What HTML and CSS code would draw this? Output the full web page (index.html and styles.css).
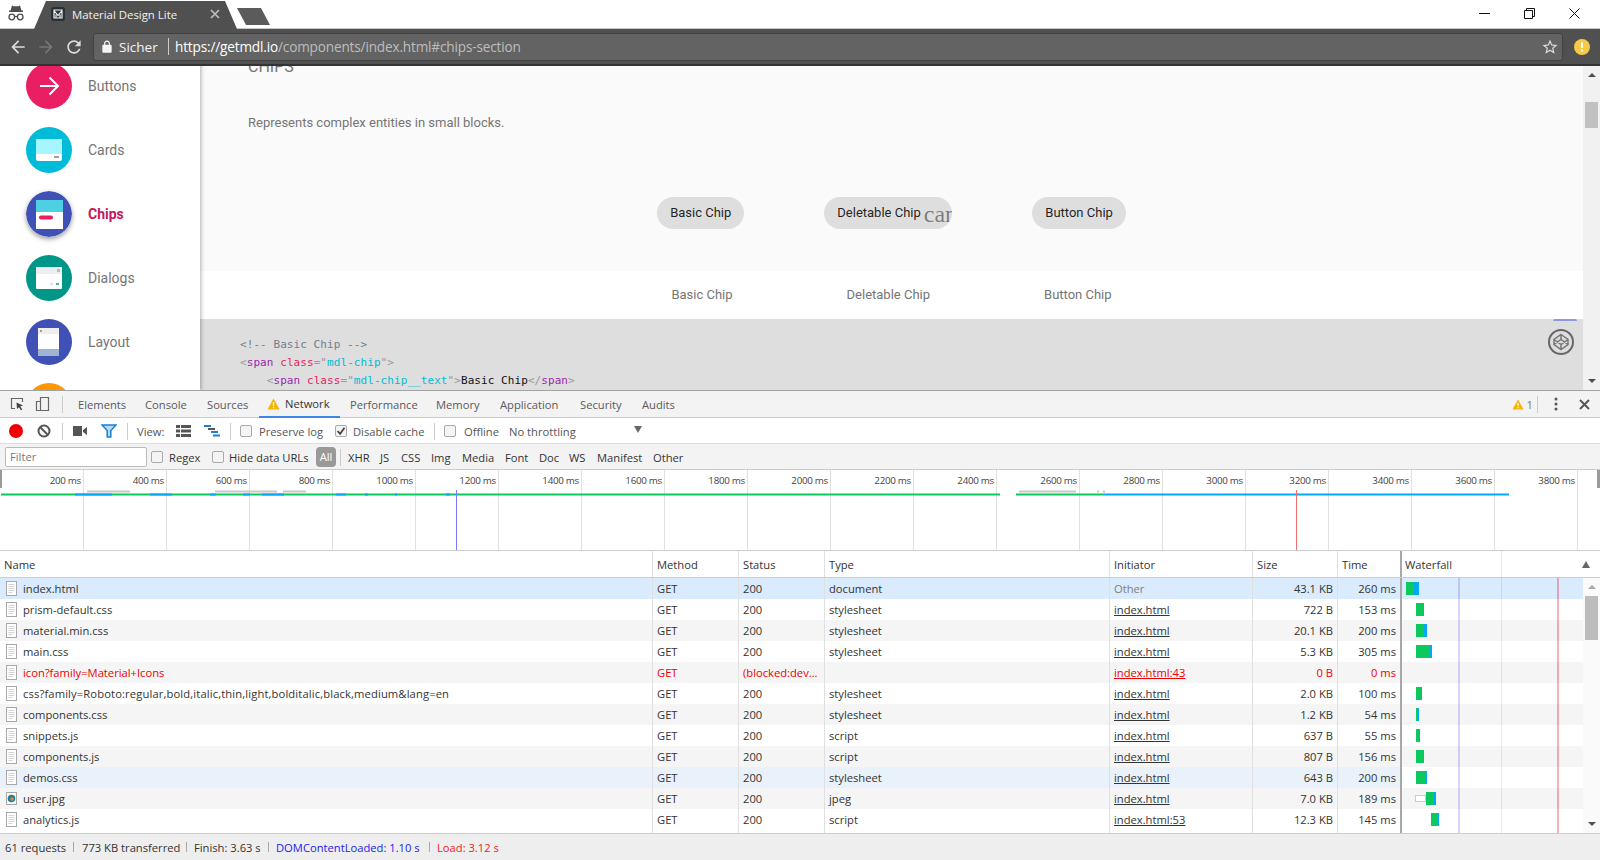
FILE: index.html
```html
<!DOCTYPE html>
<html lang="de">
<head>
<meta charset="utf-8">
<title>Material Design Lite</title>
<link rel="stylesheet" href="styles.css">
</head>
<body>
<svg class="defs" width="0" height="0" aria-hidden="true">
  <symbol id="doc" viewBox="0 0 11 15">
    <rect x=".5" y=".5" width="10" height="14" fill="#fff" stroke="#a8a8a8"/>
    <path d="M2.5 3.5h6M2.5 5.5h6M2.5 7.5h6M2.5 9.5h6M2.5 11.5h4" stroke="#d4d4d4" fill="none"/>
  </symbol>
  <symbol id="check" viewBox="0 0 12 12">
    <path d="M2.5 6l2.6 2.8 4.4-6" stroke="#444" stroke-width="1.8" fill="none"/>
  </symbol>
  <symbol id="warn" viewBox="0 0 14 13">
    <path d="M7 .5l6.6 12H.4z" fill="#f4b400"/>
    <path d="M6.3 4.5h1.4v4.2H6.3zM6.3 9.6h1.4v1.4H6.3z" fill="#fff"/>
  </symbol>
</svg>

<header class="tabstrip">
  <svg class="incognito" width="22" height="20" viewBox="0 0 22 20">
    <path d="M7 2.5l1.8.8h4.4l1.8-.8 1.4 5H18v1.4H4V7.500h1.600z" fill="#4d4d4d"/>
    <circle cx="6.800" cy="14" r="2.800" fill="none" stroke="#4d4d4d" stroke-width="1.300"/>
    <circle cx="15.200" cy="14" r="2.800" fill="none" stroke="#4d4d4d" stroke-width="1.300"/>
    <path d="M9.500 13.500h3" stroke="#4d4d4d" stroke-width="1.200"/>
  </svg>
  <div class="tab">
    <svg class="favicon" width="14" height="14" viewBox="0 0 14 14">
      <rect width="14" height="14" rx="3" fill="#263238"/>
      <path d="M3 3h8v8H3zM3 3.500l4 5 4-5M5 11V7.500M9 11V7.500" fill="none" stroke="#eceff1" stroke-width="1.200"/>
    </svg>
    <span class="tab-title">Material Design Lite</span>
    <svg class="tab-close" width="10" height="10" viewBox="0 0 10 10"><path d="M1 1l8 8M9 1l-8 8" stroke="#bdbdbd" stroke-width="1.700"/></svg>
  </div>
  <div class="newtab"></div>
  <div class="winctl">
    <svg width="11" height="11" viewBox="0 0 11 11"><path d="M0 5.500h11" stroke="#111" stroke-width="1"/></svg>
    <svg width="11" height="11" viewBox="0 0 11 11"><path d="M.5 2.500h8v8h-8zM2.500 2.500v-2h8v8h-2" fill="none" stroke="#111"/></svg>
    <svg width="11" height="11" viewBox="0 0 11 11"><path d="M.5.500l10 10M10.500.500l-10 10" stroke="#111"/></svg>
  </div>
</header>

<nav class="toolbar">
  <svg class="navbtn" width="20" height="20" viewBox="0 0 24 24"><path fill="#dcdcdc" d="M20 11H7.830l5.590-5.590L12 4l-8 8 8 8 1.410-1.410L7.830 13H20v-2z"/></svg>
  <svg class="navbtn" width="20" height="20" viewBox="0 0 24 24"><path fill="#767676" d="M4 11h12.170l-5.590-5.590L12 4l8 8-8 8-1.410-1.410L16.170 13H4v-2z"/></svg>
  <svg class="navbtn" width="20" height="20" viewBox="0 0 24 24"><path fill="#dcdcdc" d="M17.650 6.350C16.200 4.900 14.210 4 12 4c-4.420 0-7.990 3.580-7.990 8s3.570 8 7.990 8c3.730 0 6.840-2.550 7.730-6h-2.080c-.82 2.330-3.040 4-5.650 4-3.310 0-6-2.690-6-6s2.690-6 6-6c1.660 0 3.140.69 4.220 1.780L13 11h7V4l-2.350 2.350z"/></svg>
  <div class="omnibox">
    <svg class="lock" width="14" height="14" viewBox="0 0 24 24"><path fill="#f5f5f5" d="M18 8h-1V6c0-2.760-2.240-5-5-5S7 3.240 7 6v2H6c-1.100 0-2 .9-2 2v10c0 1.100.9 2 2 2h12c1.100 0 2-.9 2-2V10c0-1.100-.9-2-2-2zM9 6c0-1.660 1.340-3 3-3s3 1.340 3 3v2H9V6z"/></svg>
    <span class="secure">Sicher</span>
    <span class="omni-sep"></span>
    <span class="url"><b class="url-host">https://getmdl.io</b>/components/index.html#chips-section</span>
    <svg class="star" width="18" height="18" viewBox="0 0 24 24"><path fill="#dcdcdc" d="M22 9.240l-7.190-.62L12 2 9.190 8.630 2 9.240l5.460 4.730L5.820 21 12 17.270 18.180 21l-1.630-7.030L22 9.240zM12 15.400l-3.760 2.270 1-4.280-3.320-2.880 4.380-.38L12 6.100l1.710 4.040 4.380.38-3.320 2.880 1 4.280L12 15.400z"/></svg>
  </div>
  <svg class="badge" width="16" height="16" viewBox="0 0 16 16"><circle cx="8" cy="8" r="8" fill="#f7c948"/><path d="M7 3.500h2v5.500H7zM7 10.500h2v2H7z" fill="#fff"/></svg>
</nav>

<section class="page">
  <aside class="sidebar">
    <div class="side-item">
      <svg class="side-icon" viewBox="0 0 46 46"><circle cx="23" cy="23" r="23" fill="#e91e63"/><path d="M14 23h17M23.500 14.500L32 23l-8.500 8.500" fill="none" stroke="#fff" stroke-width="2"/></svg>
      <span>Buttons</span>
    </div>
    <div class="side-item">
      <svg class="side-icon" viewBox="0 0 46 46"><circle cx="23" cy="23" r="23" fill="#00bcd9"/><rect x="10" y="12" width="26" height="22" rx="2" fill="#fff"/><path d="M10 27V14a2 2 0 0 1 2-2h22a2 2 0 0 1 2 2v13z" fill="#a7f5ff"/><rect x="28" y="29" width="5" height="2" fill="#9e9e9e"/></svg>
      <span>Cards</span>
    </div>
    <div class="side-item side-active">
      <svg class="side-icon side-lifted" viewBox="0 0 46 46"><circle cx="23" cy="23" r="23" fill="#3f51b5"/><rect x="10" y="9" width="27" height="29" fill="#fff"/><rect x="10" y="9" width="27" height="12" fill="#4dd0e1"/><rect x="13" y="24.500" width="14" height="4" rx="2" fill="#e91e63"/></svg>
      <span>Chips</span>
    </div>
    <div class="side-item">
      <svg class="side-icon" viewBox="0 0 46 46"><circle cx="23" cy="23" r="23" fill="#009688"/><rect x="10" y="12" width="26" height="22" rx="1" fill="#fff"/><rect x="10" y="12" width="26" height="7" fill="#eee"/><rect x="31" y="14" width="3" height="3" fill="#bdbdbd"/><rect x="24" y="28" width="3" height="2" fill="#e0e0e0"/><rect x="30" y="28" width="3" height="2" fill="#4db6ac"/></svg>
      <span>Dialogs</span>
    </div>
    <div class="side-item">
      <svg class="side-icon" viewBox="0 0 46 46"><circle cx="23" cy="23" r="23" fill="#3f51b5"/><rect x="12" y="9" width="21" height="28" rx="1.500" fill="#fff"/><rect x="12" y="9" width="21" height="6" fill="#eee"/><rect x="14" y="11" width="2" height="2" fill="#9e9e9e"/><rect x="12" y="30" width="21" height="7" fill="#9fb4d3"/></svg>
      <span>Layout</span>
    </div>
    <div class="side-item">
      <svg class="side-icon" viewBox="0 0 46 46"><circle cx="23" cy="23" r="23" fill="#ff9800"/></svg>
      <span></span>
    </div>
  </aside>

  <main class="content">
    <div class="preview">
      <h2 class="heading">Chips</h2>
      <p class="lead">Represents complex entities in small blocks.</p>
      <div class="chips">
        <span class="chip">Basic Chip</span>
        <span class="chip chip-del">Deletable Chip<span class="chip-cancel">cancel</span></span>
        <span class="chip">Button Chip</span>
      </div>
    </div>
    <div class="captions">
      <span class="cap cap-a">Basic Chip</span>
      <span class="cap cap-b">Deletable Chip</span>
      <span class="cap cap-c">Button Chip</span>
    </div>
    <pre class="code"><span class="c-com">&lt;!-- Basic Chip --&gt;</span>
<span class="c-pun">&lt;</span><span class="c-tag">span</span> <span class="c-att">class</span><span class="c-pun">=</span><span class="c-pun">"</span><span class="c-str">mdl-chip</span><span class="c-pun">"&gt;</span>
    <span class="c-pun">&lt;</span><span class="c-tag">span</span> <span class="c-att">class</span><span class="c-pun">=</span><span class="c-pun">"</span><span class="c-str">mdl-chip__text</span><span class="c-pun">"&gt;</span>Basic Chip<span class="c-pun">&lt;/</span><span class="c-tag">span</span><span class="c-pun">&gt;</span></pre>
    <span class="fab-sliver"></span>
    <svg class="codepen" width="28" height="28" viewBox="0 0 28 28">
      <circle cx="14" cy="14" r="12" fill="none" stroke="#666" stroke-width="2"/>
      <path d="M14 6.500l7 5v5l-7 5-7-5v-5zM7 11.500l7 5 7-5M14 6.500v5M7 16.500l7-5 7 5M14 16.500v5" fill="none" stroke="#777" stroke-width="1.500"/>
    </svg>
  </main>

  <div class="scroll">
    <span class="arrow-up"></span>
    <span class="thumb thumb-page"></span>
    <span class="arrow-down"></span>
  </div>
</section>

<section class="devtools">
  <div class="dt-tabs">
    <svg class="dt-ico" width="16" height="16" viewBox="0 0 16 16"><path d="M13.500 6V2.500h-11v10H6" fill="none" stroke="#666" stroke-width="1.200"/><path d="M7.500 6.500l6.500 3-2.700 1 2 3-1.300.8-2-3-2 1.700z" fill="#444"/></svg>
    <svg class="dt-ico" width="16" height="16" viewBox="0 0 16 16"><path d="M5.500 1.500h8v13h-8zM5.500 5.500h-4v9h4" fill="none" stroke="#666" stroke-width="1.200"/></svg>
    <span class="vsep vsep-end"></span>
    <span class="dt-tab">Elements</span>
    <span class="dt-tab">Console</span>
    <span class="dt-tab">Sources</span>
    <span class="dt-tab dt-tab-active"><svg width="13" height="12"><use href="#warn"/></svg>Network</span>
    <span class="dt-tab">Performance</span>
    <span class="dt-tab">Memory</span>
    <span class="dt-tab">Application</span>
    <span class="dt-tab">Security</span>
    <span class="dt-tab">Audits</span>
    <div class="dt-right">
      <svg width="12" height="11"><use href="#warn"/></svg>
      <span class="warn-count">1</span>
      <span class="vsep"></span>
      <svg class="kebab" width="4" height="14" viewBox="0 0 4 14"><circle cx="2" cy="2" r="1.500" fill="#555"/><circle cx="2" cy="7" r="1.500" fill="#555"/><circle cx="2" cy="12" r="1.500" fill="#555"/></svg>
      <svg class="dt-close" width="11" height="11" viewBox="0 0 11 11"><path d="M1 1l9 9M10 1l-9 9" stroke="#555" stroke-width="2"/></svg>
    </div>
  </div>

  <div class="dt-bar">
    <span class="rec"></span>
    <svg width="14" height="14" viewBox="0 0 14 14"><circle cx="7" cy="7" r="5.500" fill="none" stroke="#555" stroke-width="2"/><path d="M3 3l8 8" stroke="#555" stroke-width="2"/></svg>
    <span class="vsep"></span>
    <svg width="14" height="10" viewBox="0 0 14 10"><path d="M0 0h9v10H0zM10 4l4-3v8l-4-3z" fill="#555"/></svg>
    <svg width="16" height="14" viewBox="0 0 16 14"><path d="M1 1h14L9.800 6.500V13H6.200V6.500z" fill="#b5ddfa" stroke="#1a7fd6" stroke-width="1.500"/></svg>
    <span class="vsep"></span>
    <span>View:</span>
    <svg width="15" height="12" viewBox="0 0 15 12"><path d="M0 0h4v3H0zM5 0h10v3H5zM0 4.500h4v3H0zM5 4.500h10v3H5zM0 9h4v3H0zM5 9h10v3H5z" fill="#555"/></svg>
    <svg width="16" height="12" viewBox="0 0 16 12"><path d="M0 0h7v2H0z" fill="#1a7fd6"/><path d="M4 3h7v2H4z" fill="#555"/><path d="M7 6h7v2H7zM9 9.500h7v2H9z" fill="#1a7fd6"/></svg>
    <span class="vsep"></span>
    <span class="cbox"></span>
    <span>Preserve log</span>
    <span class="cbox"><svg width="12" height="12"><use href="#check"/></svg></span>
    <span>Disable cache</span>
    <span class="vsep"></span>
    <span class="cbox"></span>
    <span>Offline</span>
    <span>No throttling</span>
    <span class="tri-down"></span>
  </div>

  <div class="dt-filter">
    <input class="filter-input" placeholder="Filter">
    <span class="cbox"></span>
    <span>Regex</span>
    <span class="cbox"></span>
    <span>Hide data URLs</span>
    <span class="pill">All</span>
    <span class="vsep"></span>
    <span>XHR</span><span>JS</span><span>CSS</span><span>Img</span><span>Media</span><span>Font</span><span>Doc</span><span>WS</span><span>Manifest</span><span>Other</span>
  </div>

  <div class="overview">
    <div class="ticks">
      <span>200 ms</span><span>400 ms</span><span>600 ms</span><span>800 ms</span><span>1000 ms</span><span>1200 ms</span><span>1400 ms</span><span>1600 ms</span><span>1800 ms</span><span>2000 ms</span><span>2200 ms</span><span>2400 ms</span><span>2600 ms</span><span>2800 ms</span><span>3000 ms</span><span>3200 ms</span><span>3400 ms</span><span>3600 ms</span><span>3800 ms</span>
    </div>
    <svg class="ov-chart" width="1600" height="80" viewBox="0 0 1600 80">
      <path d="M0 0h2v18H0zM1597 0h3v18h-3z" fill="#9a9a9a"/>
      <path d="M87 21.500h43M215 21.500h62M283 21.500h23M1019 21.500h57M1097 21.500h2M1103 21.500h2" stroke="#c8c8c8" stroke-width="2"/>
      <path d="M1 24.500h999M1016 24.500h88" stroke="#0bc95c" stroke-width="2"/>
      <path d="M75 24.500h37M150 24.500h22M210 24.500h6M243 24.500h7M262 24.500h22M336 24.500h10M365 24.500h3M395 24.500h2M446 24.500h4M1104 24.500h405" stroke="#03a9f4" stroke-width="2"/>
      <path d="M456.500 20v60" stroke="#7a7aff"/>
      <path d="M1296.500 20v60" stroke="#f26d6d"/>
    </svg>
  </div>

  <div class="net-head">
    <span class="col">Name</span><span class="col">Method</span><span class="col">Status</span><span class="col">Type</span><span class="col">Initiator</span><span class="col">Size</span><span class="col">Time</span>
    <span class="col col-wf">Waterfall<span class="wf-sep"></span><span class="sort-up"></span></span>
  </div>

  <div class="net-body">
    <div class="net-list">
      <div class="row row-selected"><span class="col col-name"><svg width="11" height="15"><use href="#doc"/></svg>index.html</span><span class="col">GET</span><span class="col">200</span><span class="col">document</span><span class="col col-other">Other</span><span class="col col-num">43.1 KB</span><span class="col col-num">260 ms</span><span class="col col-bars"><i class="gap" style="width:5px"></i><i class="green" style="width:8px"></i><i class="blue" style="width:5px"></i></span></div>
      <div class="row"><span class="col col-name"><svg width="11" height="15"><use href="#doc"/></svg>prism-default.css</span><span class="col">GET</span><span class="col">200</span><span class="col">stylesheet</span><span class="col col-link">index.html</span><span class="col col-num">722 B</span><span class="col col-num">153 ms</span><span class="col col-bars"><i class="gap" style="width:15px"></i><i class="green" style="width:7px"></i><i class="blue" style="width:1px"></i></span></div>
      <div class="row row-alt"><span class="col col-name"><svg width="11" height="15"><use href="#doc"/></svg>material.min.css</span><span class="col">GET</span><span class="col">200</span><span class="col">stylesheet</span><span class="col col-link">index.html</span><span class="col col-num">20.1 KB</span><span class="col col-num">200 ms</span><span class="col col-bars"><i class="gap" style="width:15px"></i><i class="green" style="width:8px"></i><i class="blue" style="width:3px"></i></span></div>
      <div class="row"><span class="col col-name"><svg width="11" height="15"><use href="#doc"/></svg>main.css</span><span class="col">GET</span><span class="col">200</span><span class="col">stylesheet</span><span class="col col-link">index.html</span><span class="col col-num">5.3 KB</span><span class="col col-num">305 ms</span><span class="col col-bars"><i class="gap" style="width:15px"></i><i class="green" style="width:14px"></i><i class="blue" style="width:2px"></i></span></div>
      <div class="row row-alt row-error"><span class="col col-name"><svg width="11" height="15"><use href="#doc"/></svg>icon?family=Material+Icons</span><span class="col">GET</span><span class="col">(blocked:dev...</span><span class="col"></span><span class="col col-link">index.html:43</span><span class="col col-num">0 B</span><span class="col col-num">0 ms</span><span class="col col-bars"></span></div>
      <div class="row"><span class="col col-name"><svg width="11" height="15"><use href="#doc"/></svg><span class="name-long">css?family=Roboto:regular,bold,italic,thin,light,bolditalic,black,medium&amp;lang=en</span></span><span class="col">GET</span><span class="col">200</span><span class="col">stylesheet</span><span class="col col-link">index.html</span><span class="col col-num">2.0 KB</span><span class="col col-num">100 ms</span><span class="col col-bars"><i class="gap" style="width:15px"></i><i class="green" style="width:5px"></i><i class="blue" style="width:1px"></i></span></div>
      <div class="row row-alt"><span class="col col-name"><svg width="11" height="15"><use href="#doc"/></svg>components.css</span><span class="col">GET</span><span class="col">200</span><span class="col">stylesheet</span><span class="col col-link">index.html</span><span class="col col-num">1.2 KB</span><span class="col col-num">54 ms</span><span class="col col-bars"><i class="gap" style="width:15px"></i><i class="green" style="width:2px"></i><i class="blue" style="width:1px"></i></span></div>
      <div class="row"><span class="col col-name"><svg width="11" height="15"><use href="#doc"/></svg>snippets.js</span><span class="col">GET</span><span class="col">200</span><span class="col">script</span><span class="col col-link">index.html</span><span class="col col-num">637 B</span><span class="col col-num">55 ms</span><span class="col col-bars"><i class="gap" style="width:15px"></i><i class="green" style="width:3px"></i><i class="blue" style="width:1px"></i></span></div>
      <div class="row row-alt"><span class="col col-name"><svg width="11" height="15"><use href="#doc"/></svg>components.js</span><span class="col">GET</span><span class="col">200</span><span class="col">script</span><span class="col col-link">index.html</span><span class="col col-num">807 B</span><span class="col col-num">156 ms</span><span class="col col-bars"><i class="gap" style="width:15px"></i><i class="green" style="width:7px"></i><i class="blue" style="width:1px"></i></span></div>
      <div class="row row-hover"><span class="col col-name"><svg width="11" height="15"><use href="#doc"/></svg>demos.css</span><span class="col">GET</span><span class="col">200</span><span class="col">stylesheet</span><span class="col col-link">index.html</span><span class="col col-num">643 B</span><span class="col col-num">200 ms</span><span class="col col-bars"><i class="gap" style="width:15px"></i><i class="green" style="width:10px"></i><i class="blue" style="width:1px"></i></span></div>
      <div class="row row-alt"><span class="col col-name"><svg class="thumb-ico" width="11" height="15" viewBox="0 0 11 15"><rect x=".5" y="1.500" width="10" height="12" fill="#fff" stroke="#a8a8a8"/><circle cx="5.500" cy="7.500" r="3.800" fill="#1f7f9e"/><circle cx="6" cy="8" r="1.800" fill="#e08a2c"/></svg>user.jpg</span><span class="col">GET</span><span class="col">200</span><span class="col">jpeg</span><span class="col col-link">index.html</span><span class="col col-num">7.0 KB</span><span class="col col-num">189 ms</span><span class="col col-bars"><i class="gap" style="width:14px"></i><i class="queue" style="width:11px"></i><i class="green" style="width:8px"></i><i class="blue" style="width:2px"></i></span></div>
      <div class="row"><span class="col col-name"><svg width="11" height="15"><use href="#doc"/></svg>analytics.js</span><span class="col">GET</span><span class="col">200</span><span class="col">script</span><span class="col col-link">index.html:53</span><span class="col col-num">12.3 KB</span><span class="col col-num">145 ms</span><span class="col col-bars"><i class="gap" style="width:30px"></i><i class="green" style="width:7px"></i><i class="blue" style="width:1px"></i></span></div>
      <div class="row row-filler"><span class="col"></span><span class="col"></span><span class="col"></span><span class="col"></span><span class="col"></span><span class="col"></span><span class="col"></span><span class="col"></span></div>
      <span class="line line-sep"></span>
      <span class="line line-blue"></span>
      <span class="line line-red"></span>
    </div>
    <div class="scroll scroll-net">
      <span class="arrow-up"></span>
      <span class="thumb thumb-net"></span>
      <span class="arrow-down"></span>
    </div>
  </div>

  <footer class="status">
    <span>61 requests</span><span class="bar-sep"></span>
    <span>773 KB transferred</span><span class="bar-sep"></span>
    <span>Finish: 3.63 s</span><span class="bar-sep"></span>
    <span class="st-blue">DOMContentLoaded: 1.10 s</span><span class="bar-sep"></span>
    <span class="st-red">Load: 3.12 s</span>
  </footer>
</section>
</body>
</html>
```

FILE: styles.css
```css
* { box-sizing: border-box; }
html, body { margin: 0; padding: 0; }
body {
  width: 1600px;
  height: 860px;
  overflow: hidden;
  display: flex;
  flex-direction: column;
  background: #fff;
  font-family: "Open Sans", "Noto Sans", sans-serif;
}
.defs { position: absolute; }

/* browser chrome */
.tabstrip {
  flex: 0 0 29px;
  display: flex;
  align-items: flex-end;
  background: #fff;
  border-bottom: 1px solid #c8c8c8;
  position: relative;
}
.incognito { margin: 0 0 5px 5px; flex: none; align-self: flex-end; }
.tab {
  margin-left: 7px;
  width: 203px;
  height: 28px;
  margin-bottom: -1px;
  background: #505050;
  clip-path: polygon(0 100%, 12px 0, 191px 0, 100% 100%);
  display: flex;
  align-items: center;
  padding: 0 0 2px 17px;
  color: #f0f0f0;
  font-size: 11.4px;
}
.favicon { flex: none; margin-right: 7px; }
.tab-title { width: 132px; white-space: nowrap; }
.tab-close { flex: none; margin-left: 6px; }
.newtab {
  width: 33px;
  height: 17px;
  margin: 0 0 3px 0;
  background: #5b5b5b;
  clip-path: polygon(0 0, 24px 0, 100% 100%, 9px 100%);
}
.winctl {
  margin-left: auto;
  align-self: flex-start;
  height: 27px;
  display: flex;
  align-items: center;
  gap: 34px;
  padding: 0 20px 0 0;
}
.toolbar {
  flex: 0 0 37px;
  display: flex;
  align-items: center;
  background: #505050;
  border-bottom: 2px solid #333;
  padding-left: 8px;
}
.navbtn { flex: none; margin-right: 8px; }
.omnibox {
  width: 1470px;
  height: 28px;
  margin-left: 1px;
  display: flex;
  align-items: center;
  background: #636363;
  border: 1px solid #414141;
  border-radius: 3px;
  padding-left: 6px;
  color: #fff;
  white-space: nowrap;
}
.lock { flex: none; }
.secure { margin-left: 5px; width: 49px; font-size: 13.5px; color: #f5f5f5; }
.omni-sep { width: 1px; height: 17px; background: #ccc; margin-right: 6px; }
.url { font-size: 13.6px; color: #bdbdbd; letter-spacing: -.012em; }
.url-host { font-weight: 400; color: #fff; }
.star { margin-left: auto; margin-right: 3px; flex: none; }
.badge { margin-left: 11px; flex: none; }

/* page */
.page {
  flex: 0 0 324px;
  display: flex;
  overflow: hidden;
  font-family: Roboto, sans-serif;
  color: #757575;
  position: relative;
}
.sidebar {
  flex: 0 0 200px;
  background: #fff;
  box-shadow: 1px 0 4px rgba(0,0,0,.3);
  z-index: 1;
  padding: 0 0 0 26px;
  margin-top: -3px;
  display: flex;
  flex-direction: column;
  gap: 18px;
  font-size: 14px;
}
.side-item { flex: none; display: flex; align-items: center; gap: 16px; height: 46px; }
.side-icon { width: 46px; height: 46px; flex: none; }
.side-lifted { border-radius: 50%; box-shadow: 0 2px 5px rgba(0,0,0,.4); }
.side-active { color: #c2185b; font-weight: 700; }
.content { flex: 1; display: flex; flex-direction: column; position: relative; min-width: 0; background: #fafafa; }
.preview { flex: 0 0 205px; padding-left: 48px; }
.heading {
  margin: -11px 0 0;
  font-size: 16px;
  line-height: 24px;
  font-weight: 400;
  text-transform: uppercase;
}
.lead { margin: 34px 0 0; font-size: 13px; line-height: 20px; }
.chips {
  margin: 64px 0 0 -48px;
  display: flex;
  justify-content: center;
  gap: 80px;
}
.chip {
  height: 32px;
  border-radius: 16px;
  background: #dedede;
  color: rgba(0,0,0,.87);
  font-size: 13px;
  line-height: 32px;
  padding: 0 13px;
  white-space: nowrap;
}
.chip-del { width: 128px; overflow: hidden; padding-right: 0; display: flex; }
.chip-cancel {
  font-family: "Liberation Serif", serif;
  font-size: 24px;
  color: rgba(0,0,0,.45);
  margin-left: 3px;
  line-height: 34px;
}
.captions {
  flex: 0 0 48px;
  background: #fff;
  display: flex;
  justify-content: center;
  align-items: center;
  gap: 114px;
  font-size: 13px;
  padding-bottom: 2px;
}
.code {
  flex: 1;
  margin: 0;
  padding: 17px 0 0 40px;
  background: #dedede;
  font-family: "DejaVu Sans Mono", monospace;
  font-size: 11px;
  letter-spacing: .07px;
  line-height: 18px;
  color: #111;
  white-space: pre;
  overflow: hidden;
}
.c-com { color: #708090; }
.c-pun { color: #999; }
.c-tag { color: #9c27b0; }
.c-att { color: #e91e63; }
.c-str { color: #00bcd4; }
.fab-sliver {
  position: absolute;
  top: 253px;
  right: 6px;
  width: 24px;
  height: 2px;
  background: #8f98dc;
  border-radius: 12px 12px 0 0;
}
.codepen { position: absolute; top: 262px; right: 8px; }

.scroll {
  flex: 0 0 17px;
  background: #f1f1f1;
  display: flex;
  flex-direction: column;
  align-items: center;
  position: relative;
}
.arrow-up, .arrow-down, .sort-up {
  width: 0;
  height: 0;
  border-left: 4px solid transparent;
  border-right: 4px solid transparent;
}
.arrow-up { border-bottom: 4px solid #505050; margin-top: 7px; }
.arrow-down { border-top: 4px solid #505050; margin-top: auto; margin-bottom: 7px; }
.thumb { width: 13px; background: #c1c1c1; }
.thumb-page { height: 26px; margin-top: 25px; }
.scroll-net { background: #fafafa; }
.scroll-net .arrow-up { border-bottom-color: #a8a8a8; margin-top: 7px; }
.thumb-net { height: 44px; margin-top: 7px; background: #bdbdbd; }

/* devtools */
.devtools {
  flex: 1;
  display: flex;
  flex-direction: column;
  font-size: 11.2px;
  color: #333;
  min-height: 0;
}
.dt-tabs {
  flex: 0 0 28px;
  display: grid;
  grid-template-columns: 33px 20px 15px 67px 62px 62px 81px 86px 64px 80px 62px 60px 1fr;
  align-items: center;
  background: #f3f3f3;
  border-top: 1px solid #a3a3a3;
  border-bottom: 1px solid #ccc;
  color: #5a5a5a;
}
.dt-ico { justify-self: center; }
.vsep { display: block; width: 1px; height: 17px; background: #ccc; }
.vsep-end { justify-self: end; margin-right: 5px; }
.dt-tab { height: 100%; display: flex; align-items: center; padding-left: 10px; white-space: nowrap; }
.dt-tab-active {
  padding-left: 8px;
  gap: 5px;
  color: #333;
  border-bottom: 2px solid #3b86e8;
  margin-bottom: -1px;
}
.dt-right { display: flex; align-items: center; justify-content: flex-end; height: 100%; }
.warn-count { margin: 0 4px 0 3px; color: #777; }
.kebab { margin: 0 21px 0 16px; }
.dt-close { margin-right: 10px; }

.dt-bar {
  flex: 0 0 26px;
  display: grid;
  grid-template-columns: 28px 25px 11px 28px 26px 10px 39px 28px 26px 10px 19px 76px 18px 81px 10px 20px 45px 125px 1fr;
  align-items: center;
  padding: 1px 0 0 9px;
  background: #fff;
  border-bottom: 1px solid #ddd;
  color: #555;
  white-space: nowrap;
}
.rec { width: 14px; height: 14px; border-radius: 50%; background: #e00; }
.cbox {
  width: 12px;
  height: 12px;
  border: 1px solid #aaa;
  border-radius: 2px;
  background: #f4f4f4;
  display: block;
  position: relative;
}
.cbox svg { position: absolute; left: -1px; top: -1px; display: block; }
.tri-down {
  width: 0;
  height: 0;
  border-left: 4px solid transparent;
  border-right: 4px solid transparent;
  border-top: 7px solid #666;
  margin-top: -3px;
}
.dt-filter {
  flex: 0 0 26px;
  display: grid;
  grid-template-columns: 146px 18px 43px 17px 87px 24px 8px 32px 21px 30px 31px 43px 34px 30px 28px 56px 1fr;
  align-items: center;
  padding: 1px 0 0 5px;
  background: #f3f3f3;
  border-bottom: 1px solid #ccc;
  white-space: nowrap;
}
.filter-input {
  width: 142px;
  height: 20px;
  margin-top: -1px;
  border: 1px solid #bbb;
  border-radius: 2px;
  background: #fff;
  font: inherit;
  padding: 0 4px;
}
.filter-input::placeholder { color: #777; opacity: 1; }
.pill {
  width: 20px;
  height: 20px;
  margin-top: -1px;
  border-radius: 4px;
  background: #999;
  color: #fff;
  text-align: center;
  line-height: 20px;
}

.overview {
  flex: 0 0 81px;
  position: relative;
  border-bottom: 1px solid #ccc;
  background: #fff;
}
.ticks {
  height: 100%;
  padding-left: 1px;
  display: grid;
  grid-template-columns: repeat(19, 83px);
  font-size: 9.8px;
  letter-spacing: -.03em;
  color: #444;
}
.ticks span { border-right: 1px solid #e0e0e0; text-align: right; padding: 4px 2px 0 0; white-space: nowrap; }
.ov-chart { position: absolute; left: 0; top: 0; }

.net-head, .row {
  display: grid;
  grid-template-columns: 652px 86px 86px 285px 143px 85px 63px 1fr;
}
.net-head {
  flex: 0 0 27px;
  border-bottom: 1px solid #ccc;
}
.net-head .col { height: 26px; line-height: 28px; }
.col {
  padding-left: 4px;
  border-left: 1px solid #e0e0e0;
  white-space: nowrap;
  overflow: hidden;
}
.col:first-child { border-left: 0; }
.col-wf { position: relative; border-left: 2px solid #a8a8a8; padding-left: 3px; }
.wf-sep { position: absolute; left: 99px; top: 0; bottom: 0; width: 1px; background: #e6e6e6; }
.sort-up {
  position: absolute;
  right: 10px;
  top: 10px;
  border-bottom: 7px solid #666;
}
.net-body { flex: 1; display: flex; min-height: 0; }
.net-list { flex: 1; position: relative; min-width: 0; }
.row { height: 21px; line-height: 21px; }
.row .col:nth-child(8) { border-left: 2px solid #a8a8a8; padding-left: 0; }
.row-alt { background: #f5f5f5; }
.row-selected .col:not(.col-bars), .row-selected .col-bars { background: #d9ebfc; }
.row-hover .col:not(.col-bars) { background: #e9f1fb; }
.row-filler { height: 3px; }
.row-error { color: #e00; }
.col-name { padding-left: 6px; display: flex; align-items: center; gap: 6px; }
.col-name svg { flex: none; }
.name-long { letter-spacing: .012em; }
.col-other { color: #808080; }
.col-link { text-decoration: underline; }
.col-num { text-align: right; padding-right: 4px; }
.col-bars { display: flex; align-items: center; }
.col-bars i { display: block; height: 13px; flex: none; }
.col-bars .gap { height: 0; margin-left: -1px; }
.col-bars .green { background: #0bc95c; }
.col-bars .blue { background: #03a9f4; }
.col-bars .queue { height: 7px; border: 1px solid #ccc; background: #fff; }
.line { position: absolute; top: 0; bottom: 0; }
.line-sep { left: 1501px; width: 1px; background: rgba(0,0,0,.08); }
.line-blue { left: 1458px; width: 2px; background: rgba(80,80,255,.24); }
.line-red { left: 1557px; width: 2px; background: rgba(225,30,40,.34); }

.status {
  flex: 0 0 27px;
  display: grid;
  grid-template-columns: 68px 9px 104px 8px 74px 8px 153px 8px 1fr;
  align-items: center;
  padding-left: 5px;
  background: #eee;
  border-top: 1px solid #ccc;
  white-space: nowrap;
}
.bar-sep { width: 1px; height: 10px; background: #aaa; }
.st-blue { color: #2222ee; }
.st-red { color: #ee2222; }
```
